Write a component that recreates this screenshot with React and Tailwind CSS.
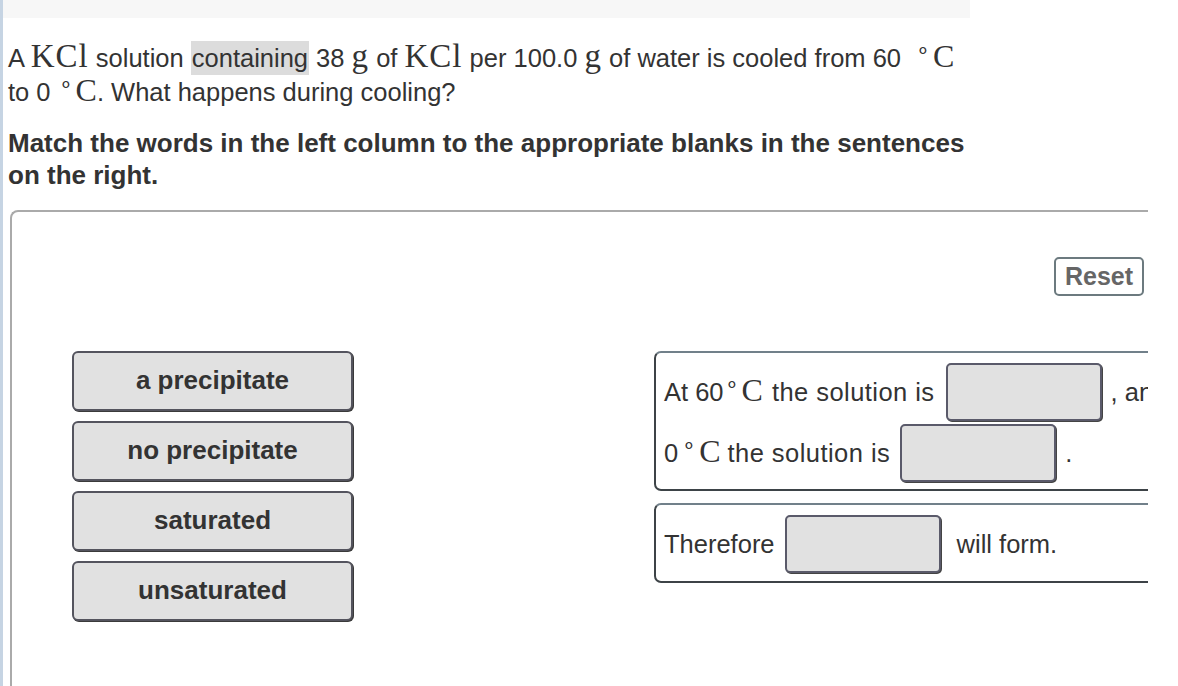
import React from "react";

const serif = { fontFamily: '"Liberation Serif", "Times New Roman", serif' };

function Deg({ ml = "ml-[8px]" }) {
  return (
    <span className="whitespace-nowrap leading-none">
      <span className={"relative top-[-10px] text-[22px] mr-[3px] leading-none " + ml} style={serif}>∘</span>
      <span className="text-[32px] leading-none" style={serif}>C</span>
    </span>
  );
}

function M({ children }) {
  return <span className="text-[33px] leading-none tracking-[1px]" style={serif}>{children}</span>;
}

function Item({ children }) {
  return (
    <div className="w-[281px] h-[60px] flex items-center justify-center rounded-[6px] border-2 border-[#54545e] bg-[#e1e1e1] shadow-[1px_1px_0_#3a3a3a] font-bold text-[26px] text-[#333] pb-[2px]">
      {children}
    </div>
  );
}

function Blank() {
  return <div className="w-[156px] h-[58px] shrink-0 rounded-[5px] border-2 border-[#5a5a6a] bg-[#e1e1e1] shadow-[1px_1px_0_#444]" />;
}

export default function App() {
  return (
    <div
      className="w-[1178px] h-[686px] overflow-hidden bg-white flex text-[#333]"
      style={{ fontFamily: '"Liberation Sans", Arial, Helvetica, sans-serif' }}
    >
      <div className="w-[3px] h-full bg-[#c6d4e3] shrink-0" />
      <div className="flex flex-col w-[1145px] overflow-hidden shrink-0">
        <div className="h-[18px] w-[967px] bg-[#f7f7f7] shrink-0" />
        <div className="pl-[5px] mt-[22px] text-[25.5px]">
          <p className="whitespace-nowrap h-[34px] leading-[34px]">
            A <M>KCl</M> solution <span className="bg-[#dcdcdc] py-[3px] px-[1px]">containing</span> 38 <M>g</M> of <M>KCl</M> per 100.0 <M>g</M> of water is cooled from 60<Deg ml="ml-[15px]" />
          </p>
          <p className="whitespace-nowrap h-[34px] leading-[34px]">
            to 0<Deg />. What happens during cooling?
          </p>
        </div>
        <p className="pl-[5px] mt-[19px] font-bold text-[26px] leading-[32px] w-[975px]">
          Match the words in the left column to the appropriate blanks in the sentences on the right.
        </p>
        <div className="mt-[19px] ml-[7px] w-[1300px] h-[480px] border-l-2 border-t-2 border-[#aaaaaa] rounded-tl-[8px] shrink-0">
          <div className="w-[1134px] flex justify-end pt-[45px]">
            <button className="w-[90px] h-[39px] mr-[2px] rounded-[5px] border-2 border-[#6c7a7f] bg-white text-[#666] font-bold text-[25px] leading-none">
              Reset
            </button>
          </div>
          <div className="flex mt-[55px]">
            <div className="ml-[60px] flex flex-col gap-[10px]">
              <Item>a precipitate</Item>
              <Item>no precipitate</Item>
              <Item>saturated</Item>
              <Item>unsaturated</Item>
            </div>
            <div className="ml-[301px] flex flex-col gap-[12px] text-[25.5px]">
              <div className="w-[640px] rounded-[7px] border-2 border-[#3d4347] border-t-[#71808a] pl-[8px] pt-[10px] pb-[7px] flex flex-col gap-[3px]">
                <div className="flex items-center h-[58px] whitespace-nowrap">
                  <span>At 60<Deg ml="ml-[1px]" /><span className="ml-[9px] tracking-[0.45px]">the solution is</span></span>
                  <span className="ml-[11px]"><Blank /></span>
                  <span className="ml-[9px]">, and at</span>
                </div>
                <div className="flex items-center h-[58px] whitespace-nowrap">
                  <span>0<Deg ml="ml-[4px]" /><span className="ml-[7px] tracking-[0.45px]">the solution is</span></span>
                  <span className="ml-[10px]"><Blank /></span>
                  <span className="ml-[9px]">.</span>
                </div>
              </div>
              <div className="w-[640px] rounded-[7px] border-2 border-[#3d4347] border-t-[#71808a] pl-[8px] pt-[10px] pb-[8px]">
                <div className="flex items-center h-[58px] whitespace-nowrap">
                  <span>Therefore</span>
                  <span className="ml-[10px]"><Blank /></span>
                  <span className="ml-[16px]">will form.</span>
                </div>
              </div>
            </div>
          </div>
        </div>
      </div>
    </div>
  );
}
